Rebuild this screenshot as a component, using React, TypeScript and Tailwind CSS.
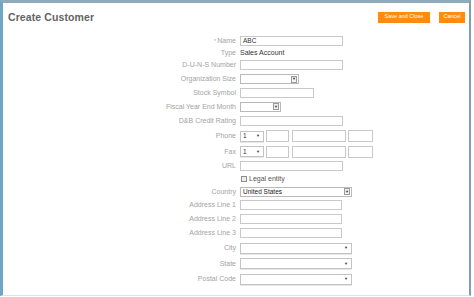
import React from "react";

const font = { fontFamily: '"Liberation Sans", Arial, sans-serif' };

function TextBox({ w, value = "" }: { w: string; value?: string }) {
  return (
    <div className={`${w} h-[10px] border border-[#c9c9c9] bg-white flex items-center text-[6.5px] leading-[8px] text-[#333] px-[2px]`}>
      {value}
    </div>
  );
}

function BoxSelect({ w, value = "" }: { w: string; value?: string }) {
  return (
    <div className={`${w} h-[10px] border border-[#b9b9b9] bg-white flex items-center justify-between pl-[2px] pr-[1px]`}>
      <span className="text-[6.5px] leading-[8px] text-[#222]">{value}</span>
      <span className="w-[6px] h-[7px] border border-[#9a9a9a] bg-[#f2f2f2] flex items-center justify-center text-[4px] leading-none text-[#333]">▼</span>
    </div>
  );
}

function PlainSelect({ w, value = "" }: { w: string; value?: string }) {
  return (
    <div className={`${w} h-[11px] border border-[#c4c4c4] bg-white flex items-center justify-between pl-[2px] pr-[3px] shadow-[0_1px_0_#e6e6e6]`}>
      <span className="text-[6.5px] leading-[8px] text-[#333]">{value}</span>
      <span className="text-[4px] leading-none text-[#333]">▼</span>
    </div>
  );
}

function PhoneRow() {
  return (
    <div className="flex items-center">
      <PlainSelect w="w-[24px]" value="1" />
      <div className="ml-[2px] w-[23px] h-[12px] border border-[#c9c9c9] bg-white" />
      <div className="ml-[3px] w-[54px] h-[12px] border border-[#c9c9c9] bg-white" />
      <div className="ml-[2px] w-[25px] h-[12px] border border-[#c9c9c9] bg-white" />
    </div>
  );
}

type Row = { label: React.ReactNode; h: string; field: React.ReactNode };

const rows: Row[] = [
  { label: <><span className="text-[5px]">* </span>Name</>, h: "h-[12px]", field: <TextBox w="w-[103px]" value="ABC" /> },
  { label: "Type", h: "h-[11px]", field: <span className="text-[7px] leading-[8px] text-[#333]">Sales Account</span> },
  { label: "D-U-N-S Number", h: "h-[14px]", field: <TextBox w="w-[103px]" /> },
  { label: "Organization Size", h: "h-[14px]", field: <BoxSelect w="w-[59px]" /> },
  { label: "Stock Symbol", h: "h-[14px]", field: <TextBox w="w-[74px]" /> },
  { label: "Fiscal Year End Month", h: "h-[13px]", field: <BoxSelect w="w-[41px]" /> },
  { label: "D&B Credit Rating", h: "h-[15px]", field: <TextBox w="w-[103px]" /> },
  { label: "Phone", h: "h-[16px]", field: <PhoneRow /> },
  { label: "Fax", h: "h-[15px]", field: <PhoneRow /> },
  { label: "URL", h: "h-[13px]", field: <TextBox w="w-[103px]" /> },
  {
    label: "",
    h: "h-[13px]",
    field: (
      <div className="flex items-center ml-[1px]">
        <span className="w-[6px] h-[6px] border border-[#8d8d8d] bg-[#eeeeee]" />
        <span className="ml-[2px] text-[7px] leading-[8px] text-[#555]">Legal entity</span>
      </div>
    ),
  },
  { label: "Country", h: "h-[13px]", field: <BoxSelect w="w-[112px]" value="United States" /> },
  { label: "Address Line 1", h: "h-[14px]", field: <TextBox w="w-[102px]" /> },
  { label: "Address Line 2", h: "h-[14px]", field: <TextBox w="w-[102px]" /> },
  { label: "Address Line 3", h: "h-[14px]", field: <TextBox w="w-[102px]" /> },
  { label: "City", h: "h-[16px]", field: <PlainSelect w="w-[112px]" /> },
  { label: "State", h: "h-[15px]", field: <PlainSelect w="w-[112px]" /> },
  { label: "Postal Code", h: "h-[16px]", field: <PlainSelect w="w-[112px]" /> },
];

export default function App() {
  return (
    <div className="w-[474px] h-[297px] overflow-hidden bg-white" style={font}>
      <div className="w-[471px] h-[296px] border-t-[3px] border-l-[3px] border-r-[2px] border-t-[#8eaabb] border-l-[#6ea6c6] border-r-[#7c9fae] border-b border-b-[#d9e3e8] bg-white">
        {/* Header */}
        <div className="h-[28px] flex items-center justify-between pl-[5px] pr-[4px]">
          <h1 className="text-[10.5px] leading-[12px] font-bold text-[#646464] tracking-[0.1px]">Create Customer</h1>
          <div className="flex items-center gap-[9px]">
            <button className="w-[52px] h-[11px] bg-[#ff8b0f] text-white text-[5.5px] leading-none">Save and Close</button>
            <button className="w-[26px] h-[11px] bg-[#ff8b0f] text-white text-[5.5px] leading-none">Cancel</button>
          </div>
        </div>

        {/* Form */}
        <div className="mt-[4px] flex flex-col">
          {rows.map((r, i) => (
            <div key={i} className={`${r.h} flex items-center`}>
              <div className="w-[233px] text-right text-[7px] leading-[8px] text-[#a3a3a3] whitespace-nowrap">{r.label}</div>
              <div className="ml-[4px] flex items-center">{r.field}</div>
            </div>
          ))}
        </div>
      </div>
    </div>
  );
}
